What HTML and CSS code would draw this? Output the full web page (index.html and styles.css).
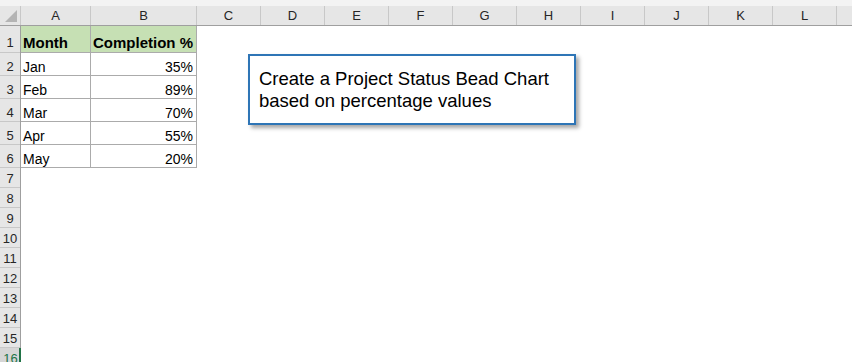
FILE: index.html
```html
<!DOCTYPE html>
<html lang="en-US">
  <head>
    <meta charset="UTF-8" />
    <title>Bead Chart Data</title>
    <link rel="stylesheet" href="styles.css">
  </head>
  <body>
    <div class="sheet">
      <div class="top-strip"></div>
      <div class="col-heads">
        <div class="corner"><span class="corner-tri"></span></div>
        <div class="col-head col-a">A</div>
        <div class="col-head col-b">B</div>
        <div class="col-head">C</div>
        <div class="col-head">D</div>
        <div class="col-head">E</div>
        <div class="col-head">F</div>
        <div class="col-head">G</div>
        <div class="col-head">H</div>
        <div class="col-head">I</div>
        <div class="col-head">J</div>
        <div class="col-head">K</div>
        <div class="col-head">L</div>
        <div class="col-head col-rest"></div>
      </div>
      <div class="sheet-body">
        <div class="row-heads">
          <div class="row-head row-tall">1</div>
          <div class="row-head row-mid">2</div>
          <div class="row-head row-mid">3</div>
          <div class="row-head row-mid">4</div>
          <div class="row-head row-mid">5</div>
          <div class="row-head row-mid">6</div>
          <div class="row-head">7</div>
          <div class="row-head">8</div>
          <div class="row-head">9</div>
          <div class="row-head">10</div>
          <div class="row-head">11</div>
          <div class="row-head">12</div>
          <div class="row-head">13</div>
          <div class="row-head">14</div>
          <div class="row-head">15</div>
          <div class="row-head row-sel">16</div>
        </div>
        <div class="cells">
          <div class="data">
            <div class="cell head">Month</div>
            <div class="cell head">Completion %</div>
            <div class="cell">Jan</div>
            <div class="cell num">35%</div>
            <div class="cell">Feb</div>
            <div class="cell num">89%</div>
            <div class="cell">Mar</div>
            <div class="cell num">70%</div>
            <div class="cell">Apr</div>
            <div class="cell num">55%</div>
            <div class="cell">May</div>
            <div class="cell num">20%</div>
          </div>
          <div class="note">Create a Project Status Bead Chart<br>based on percentage values</div>
        </div>
      </div>
    </div>
  </body>
</html>
```

FILE: styles.css
```css
body {
  margin: 0;
  background-color: #ffffff;
  font-family: "Liberation Sans", Arial, sans-serif;
  color: #000;
}

.sheet {
  width: 852px;
  height: 362px;
  overflow: hidden;
  display: flex;
  flex-direction: column;
}

.top-strip {
  flex: none;
  height: 6px;
  background: #f3f3f3;
}

.col-heads {
  flex: none;
  display: flex;
  height: 20px;
  box-sizing: border-box;
  background: #e6e6e6;
  border-bottom: 1px solid #9f9f9f;
}

.corner {
  width: 21px;
  flex: none;
  box-sizing: border-box;
  border-right: 1px solid #c8c8c8;
  position: relative;
}

.corner-tri {
  position: absolute;
  left: 5px;
  top: 4px;
  width: 0;
  height: 0;
  border-left: 12px solid transparent;
  border-bottom: 12px solid #b4b4b4;
}

.col-head {
  width: 64px;
  flex: none;
  box-sizing: border-box;
  border-right: 1px solid #c8c8c8;
  font-size: 13px;
  line-height: 20px;
  text-align: center;
  color: #262626;
}

.col-a {
  width: 70px;
}

.col-b {
  width: 106px;
}

.col-rest {
  flex: 1;
  border-right: none;
}

.sheet-body {
  display: flex;
  flex: 1;
  min-height: 0;
}

.row-heads {
  width: 21px;
  flex: none;
  box-sizing: border-box;
  background: #e6e6e6;
  border-right: 1px solid #9f9f9f;
}

.row-head {
  height: 20px;
  box-sizing: border-box;
  border-bottom: 1px solid #c8c8c8;
  font-size: 13px;
  line-height: 21px;
  text-align: center;
  color: #262626;
}

.row-tall {
  height: 27px;
  line-height: 33px;
}

.row-mid {
  height: 23px;
  line-height: 27px;
}

.row-sel {
  color: #217346;
  background: #d6d6d6;
  box-shadow: inset -2px 0 0 #217346;
  margin-right: -1px;
}

.cells {
  flex: 1;
  position: relative;
}

.data {
  display: grid;
  grid-template-columns: 70px 106px;
  grid-template-rows: 27px repeat(5, 23px);
}

.cell {
  box-sizing: border-box;
  border-right: 1px solid #ababab;
  border-bottom: 1px solid #ababab;
  font-size: 14px;
  padding: 0 3px 0 2px;
  display: flex;
  align-items: flex-end;
}

.head {
  background: #c6e0b4;
  font-weight: bold;
  font-size: 15px;
  padding-bottom: 1px;
}

.num {
  justify-content: flex-end;
}

.note {
  position: absolute;
  left: 227px;
  top: 28px;
  width: 328px;
  height: 71px;
  box-sizing: border-box;
  border: 2px solid #2e75b6;
  background: #fff;
  box-shadow: 3px 3px 4px rgba(0, 0, 0, 0.35);
  font-size: 18.5px;
  line-height: 22px;
  padding: 12px 0 0 9px;
}
```
